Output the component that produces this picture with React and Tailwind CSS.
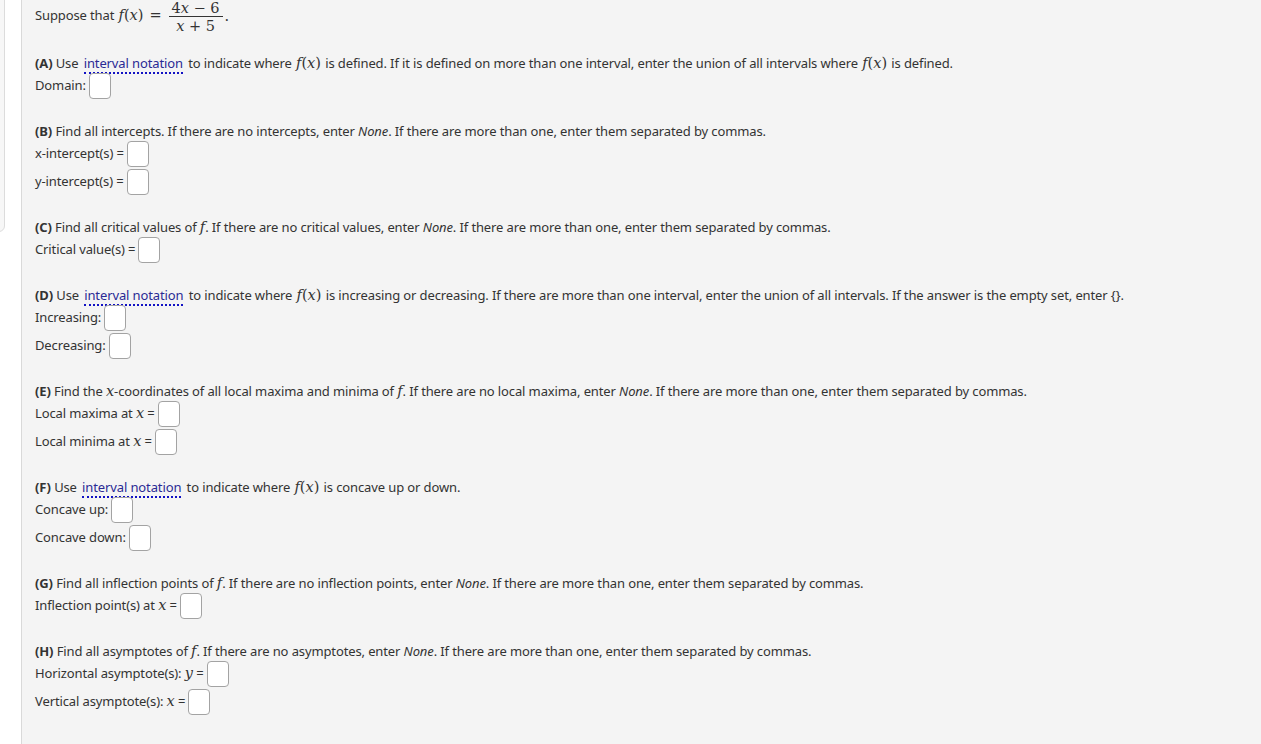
import React from 'react'

// math pieces, rendered in a serif italic like KaTeX
const V = ({ children }) => (
  <span className="font-['DejaVu_Serif',serif] italic text-[14.5px] leading-[0] tracking-normal">{children}</span>
)
const U = ({ children }) => (
  <span className="font-['DejaVu_Serif',serif] text-[14.5px] leading-[0] tracking-normal">{children}</span>
)
const Fx = () => (
  <span className="whitespace-nowrap mx-[1px]">
    <V>f</V>
    <U>(</U>
    <V>x</V>
    <U>)</U>
  </span>
)

const Box = () => (
  <span className="inline-block w-[22px] h-[26px] align-middle border border-[#a3a3a3] rounded-[4px] bg-white" />
)

const Link = ({ children }) => (
  <span className="text-[#2a2a94] border-b-2 border-dotted border-[#1212c4] mx-[2px]">{children}</span>
)

function Question({ label, children, rows }) {
  return (
    <div className="mb-[23px]">
      <div className="h-[17px] leading-[17px] whitespace-nowrap">
        <span className="font-bold">{label}</span> {children}
      </div>
      {rows.map((r, i) => (
        <div key={i} className="h-[28px] flex items-center whitespace-nowrap">
          <span>{r}</span>
          <span className="ml-[3px]">
            <Box />
          </span>
        </div>
      ))}
    </div>
  )
}

export default function App() {
  return (
    <div className="flex min-h-[744px] bg-white font-['Noto_Sans',sans-serif] text-[13px] tracking-[-0.12px] text-[#333]">
      {/* left rail with the clipped panel */}
      <div className="w-[21px] shrink-0 relative">
        <div className="absolute -left-[10px] top-[-8px] w-[15px] h-[240px] border border-[#dcdcdc] rounded-[6px] bg-[#f7f7f7]" />
      </div>
      <div className="flex-1 border-l border-[#d9d9d9] bg-[#f4f4f4] pl-[13px]">
        <div className="h-[32px] flex items-center">
          <span>Suppose that&nbsp;</span>
          <Fx />
          <span className="mx-[5px]">
            <U>=</U>
          </span>
          <span className="inline-flex flex-col items-center mx-[2px]">
            <span className="px-[3px] h-[14px] leading-[14px] pt-[1px]">
              <U>4</U>
              <V>x</V>
              <U> − 6</U>
            </span>
            <span className="w-full h-px my-[2px] bg-[#333]" />
            <span className="px-[3px] h-[14px] leading-[14px]">
              <V>x</V>
              <U> + 5</U>
            </span>
          </span>
          <U>.</U>
        </div>

        <div className="mt-[23px]">
          <Question label="(A)" rows={['Domain:']}>
            Use <Link>interval notation</Link> to indicate where <Fx /> is defined. If it is defined on more than one
            interval, enter the union of all intervals where <Fx /> is defined.
          </Question>

          <Question label="(B)" rows={['x-intercept(s) =', 'y-intercept(s) =']}>
            Find all intercepts. If there are no intercepts, enter <i>None</i>. If there are more than one, enter them
            separated by commas.
          </Question>

          <Question label="(C)" rows={['Critical value(s) =']}>
            Find all critical values of <V>f</V>. If there are no critical values, enter <i>None</i>. If there are more
            than one, enter them separated by commas.
          </Question>

          <Question label="(D)" rows={['Increasing:', 'Decreasing:']}>
            Use <Link>interval notation</Link> to indicate where <Fx /> is increasing or decreasing. If there are more
            than one interval, enter the union of all intervals. If the answer is the empty set, enter {'{}'}.
          </Question>

          <Question
            label="(E)"
            rows={[
              <>Local maxima at <V>x</V> =</>,
              <>Local minima at <V>x</V> =</>,
            ]}
          >
            Find the <V>x</V>-coordinates of all local maxima and minima of <V>f</V>. If there are no local maxima, enter{' '}
            <i>None</i>. If there are more than one, enter them separated by commas.
          </Question>

          <Question label="(F)" rows={['Concave up:', 'Concave down:']}>
            Use <Link>interval notation</Link> to indicate where <Fx /> is concave up or down.
          </Question>

          <Question label="(G)" rows={[<>Inflection point(s) at <V>x</V> =</>]}>
            Find all inflection points of <V>f</V>. If there are no inflection points, enter <i>None</i>. If there are
            more than one, enter them separated by commas.
          </Question>

          <Question
            label="(H)"
            rows={[
              <>Horizontal asymptote(s): <V>y</V> =</>,
              <>Vertical asymptote(s): <V>x</V> =</>,
            ]}
          >
            Find all asymptotes of <V>f</V>. If there are no asymptotes, enter <i>None</i>. If there are more than one,
            enter them separated by commas.
          </Question>
        </div>
      </div>
    </div>
  )
}
